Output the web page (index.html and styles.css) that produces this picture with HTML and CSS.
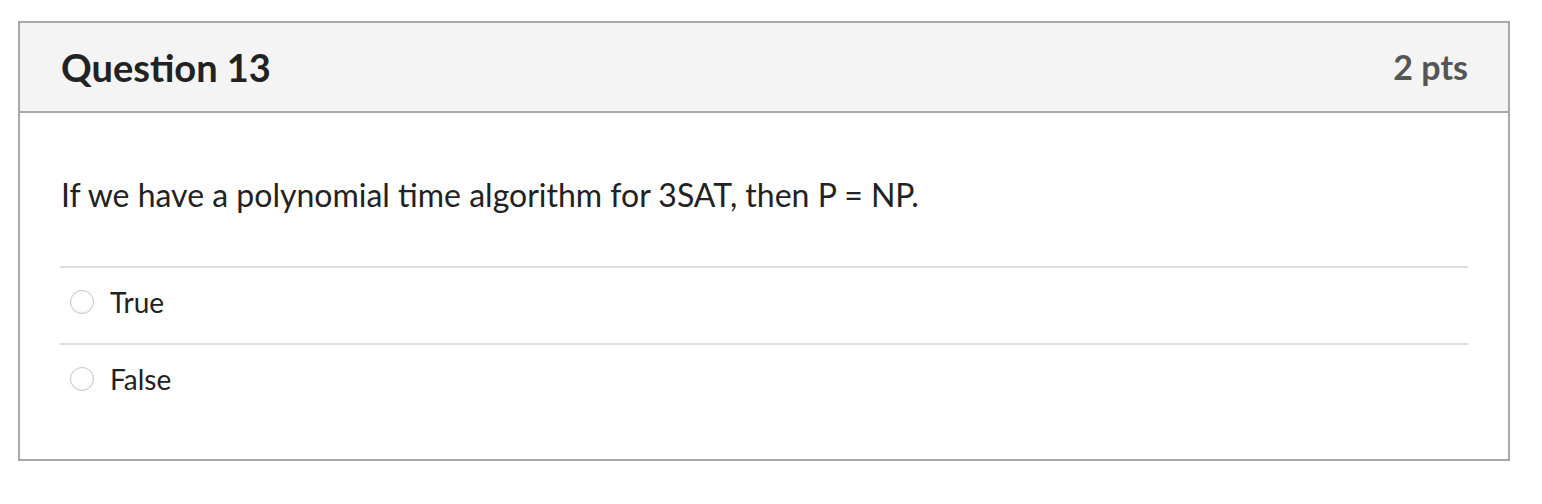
FILE: index.html
```html
<!DOCTYPE html>
<html lang="en">
<head>
<meta charset="utf-8">
<title>Question 13</title>
<link rel="stylesheet" href="styles.css">
</head>
<body>
<div class="question">
  <div class="question-header">
    <h2 class="question-name">Question 13</h2>
    <span class="question-points">2 pts</span>
  </div>
  <div class="question-body">
    <p class="question-text">If we have a polynomial time algorithm for 3SAT, then P = NP.</p>
    <div class="answers">
      <label class="answer">
        <span class="radio"></span>
        <span class="answer-label">True</span>
      </label>
      <label class="answer">
        <span class="radio"></span>
        <span class="answer-label">False</span>
      </label>
    </div>
  </div>
</div>
</body>
</html>
```

FILE: styles.css
```css
html, body {
  margin: 0;
  padding: 0;
  background: #ffffff;
}

body {
  padding: 21px 0 0 18px;
  font-family: Lato, "Liberation Sans", sans-serif;
  color: #222222;
}

.question {
  box-sizing: border-box;
  width: 1492px;
  height: 440px;
  border: 2px solid #a9a9a9;
  background: #ffffff;
}

.question-header {
  box-sizing: border-box;
  height: 90px;
  background: #f4f4f4;
  border-bottom: 2px solid #a9a9a9;
  padding: 0 40px 0 41px;
  display: flex;
  align-items: center;
  justify-content: space-between;
}

.question-name {
  margin: 0;
  font-size: 38px;
  line-height: 46px;
  font-weight: 700;
  color: #222222;
}

.question-points {
  font-size: 34px;
  line-height: 46px;
  font-weight: 700;
  color: #555555;
}

.question-body {
  padding: 0 40px 40px;
}

.question-text {
  margin: 0;
  padding: 58px 0 47px 1px;
  font-size: 32px;
  line-height: 48px;
  color: #222222;
}

.answer {
  display: flex;
  align-items: center;
  gap: 16px;
  border-top: 2px solid #dddddd;
  padding: 17px 0 24px 10px;
}

.radio {
  box-sizing: border-box;
  width: 24px;
  height: 24px;
  border-radius: 50%;
  border: 1px solid #c4c4c4;
  background: radial-gradient(circle at 50% 35%, #ffffff 55%, #ececec 100%);
  flex: none;
}

.answer-label {
  font-size: 28px;
  line-height: 34px;
  color: #222222;
}
```
